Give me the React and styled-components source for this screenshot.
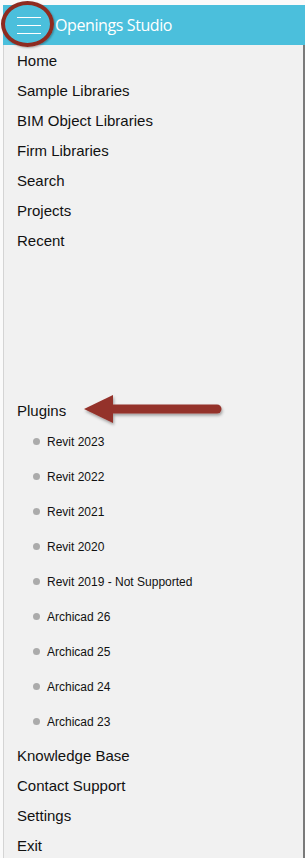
import React from "react";
import styled, { createGlobalStyle } from "styled-components";

const GlobalStyle = createGlobalStyle`
  html, body {
    margin: 0;
    padding: 0;
    background: #fafafa;
  }
`;

const Page = styled.div`
  position: relative;
  padding: 5px 0 0 3px;
  width: 305px;
  height: 858px;
  box-sizing: border-box;
  overflow: hidden;
`;

const Header = styled.div`
  display: flex;
  align-items: center;
  height: 40px;
  background: #4bbfdc;
  padding-left: 14px;
`;

const Burger = styled.div`
  display: flex;
  flex-direction: column;
  gap: 7px;
  width: 24px;
  margin-right: 14px;

  span {
    display: block;
    height: 1px;
    background: #fff;
  }
`;

const Title = styled.div`
  font-family: "Open Sans", sans-serif;
  font-size: 16px;
  letter-spacing: -0.4px;
  color: #fff;
`;

const Panel = styled.div`
  background: #f1f1f1;
  border-left: 1px solid #d4d4d4;
  border-right: 2px solid #7a7a7a;
  height: 813px;
  padding: 1px 0 0 13px;
  box-sizing: border-box;
`;

const Item = styled.div`
  font-family: "Liberation Sans", Arial, sans-serif;
  font-size: 15px;
  line-height: 30px;
  color: #111;
  margin-top: ${(p) => p.gap || 0}px;
`;

const SubList = styled.div`
  margin: -2px 0 2px;
  padding-left: 16px;
`;

const SubItem = styled.div`
  display: flex;
  align-items: center;
  gap: 7px;
  height: 35px;
  font-family: "Liberation Sans", Arial, sans-serif;
  font-size: 12px;
  color: #111;

  &::before {
    content: "";
    width: 7px;
    height: 7px;
    border-radius: 50%;
    background: #ababab;
  }
`;

const Ring = styled.div`
  position: absolute;
  left: 1px;
  top: 1px;
  width: 53px;
  height: 46px;
  box-sizing: border-box;
  border: 4px solid #8e2b20;
  border-radius: 50%;
  box-shadow: 1px 1px 2px rgba(0, 0, 0, 0.3);
`;

const Arrow = styled.svg`
  position: absolute;
  left: 82px;
  top: 392px;
`;

const main = ["Home", "Sample Libraries", "BIM Object Libraries", "Firm Libraries", "Search", "Projects", "Recent"];
const plugins = [
  "Revit 2023",
  "Revit 2022",
  "Revit 2021",
  "Revit 2020",
  "Revit 2019 - Not Supported",
  "Archicad 26",
  "Archicad 25",
  "Archicad 24",
  "Archicad 23",
];
const bottom = ["Knowledge Base", "Contact Support", "Settings", "Exit"];

export default function App() {
  return (
    <Page>
      <GlobalStyle />
      <Header>
        <Burger>
          <span />
          <span />
          <span />
        </Burger>
        <Title>Openings Studio</Title>
      </Header>
      <Panel>
        {main.map((m) => (
          <Item key={m}>{m}</Item>
        ))}
        <Item gap={140}>Plugins</Item>
        <SubList>
          {plugins.map((p) => (
            <SubItem key={p}>{p}</SubItem>
          ))}
        </SubList>
        {bottom.map((b) => (
          <Item key={b}>{b}</Item>
        ))}
      </Panel>
      <Ring />
      <Arrow width="150" height="40" viewBox="0 0 150 40">
        <defs>
          <filter id="sh" x="-10%" y="-30%" width="130%" height="170%">
            <feDropShadow dx="1" dy="2" stdDeviation="1.5" floodColor="#000" floodOpacity="0.35" />
          </filter>
        </defs>
        <g filter="url(#sh)">
          <line x1="26" y1="17" x2="135" y2="17" stroke="#94322a" strokeWidth="9" strokeLinecap="round" />
          <polygon points="2,17 31,3 31,31" fill="#94322a" />
        </g>
      </Arrow>
    </Page>
  );
}
